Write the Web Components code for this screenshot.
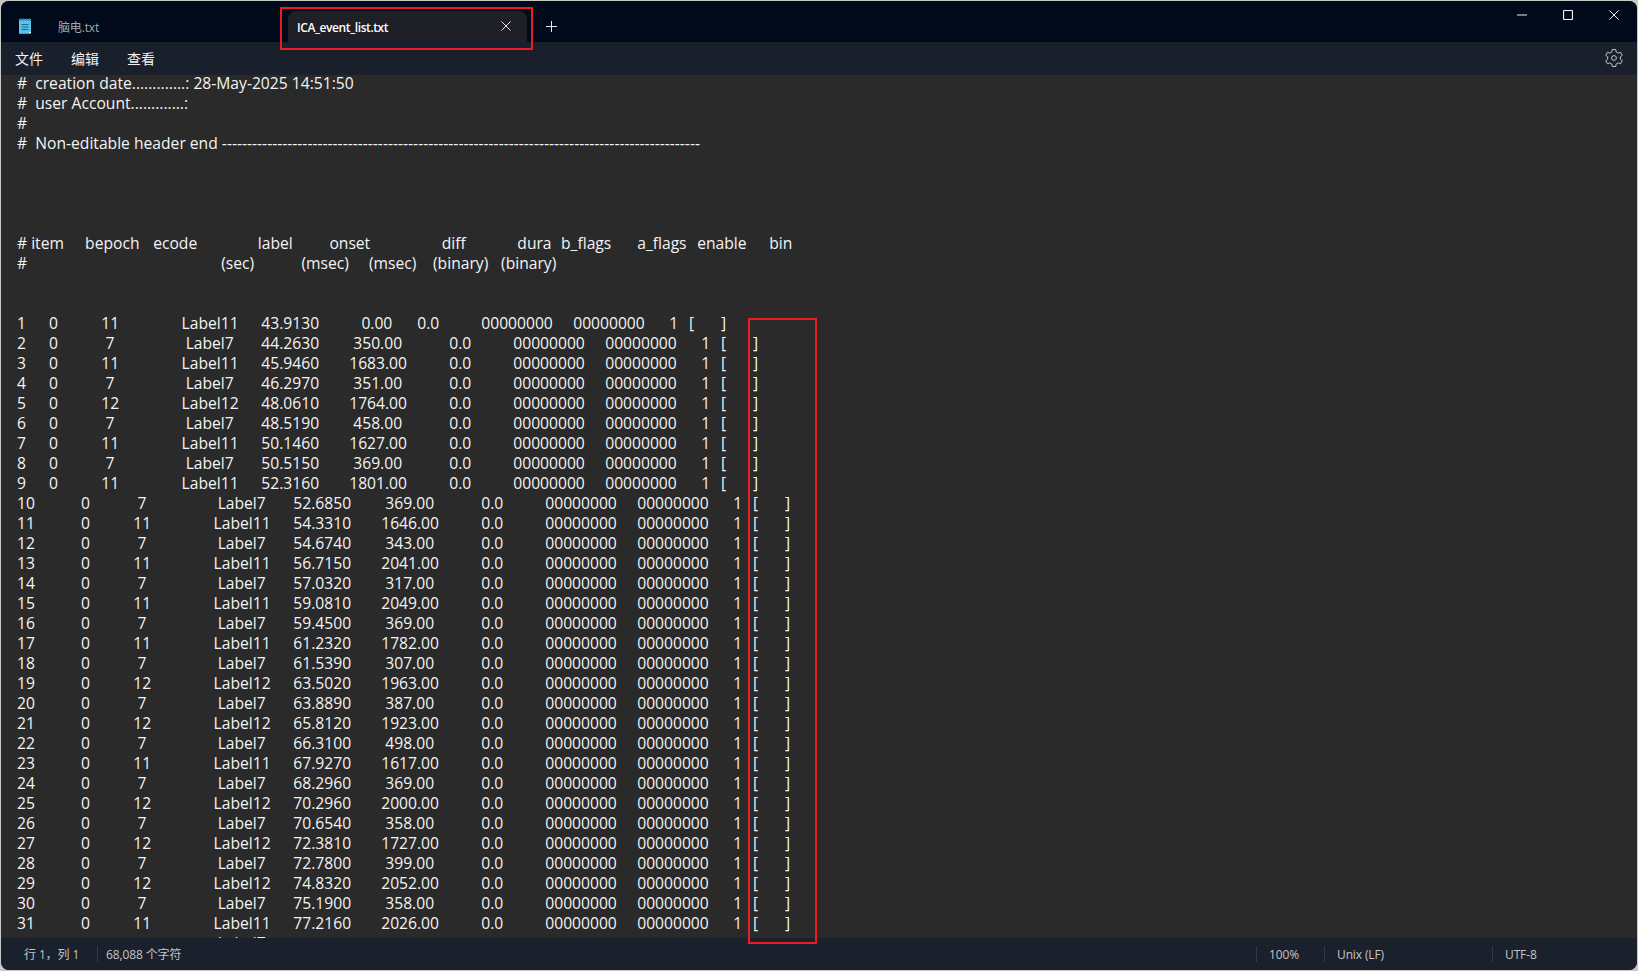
<!DOCTYPE html>
<html lang="zh"><head><meta charset="utf-8"><title>ICA_event_list.txt</title>
<style>
html,body{margin:0;height:100%;overflow:hidden}
body{background:#c8c8c8;padding:1px 1px 1px 1px;box-sizing:border-box;width:1638px;height:971px}
</style></head><body>
<np-window>
  <np-titlebar></np-titlebar>
  <np-menubar></np-menubar>
  <np-editor></np-editor>
  <np-status></np-status>
</np-window>
<script>
const UI='"Open Sans","Noto Sans CJK SC",sans-serif';
function el(name,html){customElements.define(name,class extends HTMLElement{connectedCallback(){if(!this.shadowRoot)this.attachShadow({mode:'open'}).innerHTML=html;}});}

el('np-window',`<style>:host{display:flex;flex-direction:column;position:relative;height:969px;border-radius:8px;overflow:hidden;background:#2a2a2a}
.mark{position:absolute;box-sizing:border-box;border:2px solid #ed1c24;pointer-events:none}
.m1{left:279px;top:6px;width:253px;height:43px}
.m2{left:747px;top:317px;width:69px;height:626px}</style>
<slot></slot><div class="mark m1"></div><div class="mark m2"></div>`);

el('np-tab',`<style>:host{display:flex;align-items:center;box-sizing:border-box;width:239px;height:31px;padding:0 16px 0 9px;border-radius:8px 8px 0 0;font:12px ${UI};color:#a9adb3}
:host([active]){background:#1e1f27;color:#fff;font-weight:600;letter-spacing:-.42px}
.t{flex:1;white-space:pre;position:relative;top:1px}
svg{display:block;position:relative;top:-1px}</style><span class="t"><slot></slot></span><svg width="10" height="10" viewBox="0 0 10 10"><path d="M.5.5l9 9M9.5.5l-9 9" stroke="#e6e6e6" stroke-width="1" fill="none"/></svg>`);

el('np-titlebar',`<style>:host{display:flex;align-items:flex-end;height:41px;background:#000a1a;flex:none}
.ic{width:48px;align-self:flex-start;padding:17px 0 0 18px;box-sizing:border-box}
.ic svg{display:block}
.plain{display:flex;align-items:center;width:239px;height:31px;padding-left:9px;box-sizing:border-box;font:12px ${UI};letter-spacing:-.15px;color:#a2a6ac}
.plus{width:48px;height:31px;display:flex;align-items:center;justify-content:center}
.sp{flex:1}
.w{align-self:flex-start;width:46px;height:28px;display:flex;align-items:center;justify-content:center}
</style>
<div class="ic"><svg width="12" height="16" viewBox="0 0 12 16"><rect y="1" width="12" height="14" fill="#58c2ea"/><rect y="1" width="12" height="2" fill="#3ba6d2"/><path d="M2.5 6.5h7M2.5 9h7M2.5 11.5h7" stroke="#17688f" stroke-width="1"/><path d="M1.5 0v2M4.5 0v2M7.5 0v2M10.5 0v2" stroke="#176f8e" stroke-width="1"/><rect y="15" width="12" height="1" fill="#c47a3c"/><rect x="10" y="14" width="2" height="1" fill="#e7f6fc"/></svg></div>
<div class="plain">脑电.txt</div>
<np-tab active>ICA_event_list.txt</np-tab>
<div class="plus"><svg width="11" height="11" viewBox="0 0 11 11"><path d="M5.5 0v11M0 5.5h11" stroke="#e8e8e8" stroke-width="1"/></svg></div>
<div class="sp"></div>
<div class="w"><svg width="10" height="2" viewBox="0 0 10 2"><path d="M0 1h10" stroke="#f0f0f0" stroke-width="1.1"/></svg></div>
<div class="w"><svg width="10" height="10" viewBox="0 0 10 10"><rect x=".5" y=".5" width="9" height="9" rx="1" stroke="#f4f4f4" stroke-width="1.2" fill="none"/></svg></div>
<div class="w"><svg width="10" height="10" viewBox="0 0 10 10"><path d="M.3.3l9.4 9.4M9.7.3L.3 9.7" stroke="#f0f0f0" stroke-width="1" fill="none"/></svg></div>`);

// six-lobed gear outline
const gear=(()=>{let d='';const P=(r,a)=>(12+r*Math.cos(a*Math.PI/180)).toFixed(2)+' '+(12+r*Math.sin(a*Math.PI/180)).toFixed(2);
for(let i=0;i<6;i++){const a=i*60-90;d+=(i?'L':'M')+P(8.6,a-19)+'L'+P(11.6,a-12)+'L'+P(11.6,a+12)+'L'+P(8.6,a+19);}return d+'Z';})();

el('np-menubar',`<style>:host{display:flex;align-items:center;box-sizing:border-box;height:33px;flex:none;background:#1a202b;padding:0 14px 2px 14px;font:14px ${UI};color:#f2f2f2}
span{margin-right:28px}.sp{flex:1}svg{display:block}</style>
<span>文件</span><span>编辑</span><span>查看</span><div class="sp"></div>
<svg width="18" height="18" viewBox="0 0 24 24" fill="none" stroke="#c4c7cc" stroke-width="1.3" stroke-linejoin="round"><circle cx="12" cy="12" r="3.2"/><path d="${gear}"/></svg>`);

const sp=n=>' '.repeat(n);
const data=[[11,'43.9130','0.00'],[7,'44.2630','350.00'],[11,'45.9460','1683.00'],[7,'46.2970','351.00'],[12,'48.0610','1764.00'],[7,'48.5190','458.00'],[11,'50.1460','1627.00'],[7,'50.5150','369.00'],[11,'52.3160','1801.00'],[7,'52.6850','369.00'],[11,'54.3310','1646.00'],[7,'54.6740','343.00'],[11,'56.7150','2041.00'],[7,'57.0320','317.00'],[11,'59.0810','2049.00'],[7,'59.4500','369.00'],[11,'61.2320','1782.00'],[7,'61.5390','307.00'],[12,'63.5020','1963.00'],[7,'63.8890','387.00'],[12,'65.8120','1923.00'],[7,'66.3100','498.00'],[11,'67.9270','1617.00'],[7,'68.2960','369.00'],[12,'70.2960','2000.00'],[7,'70.6540','358.00'],[12,'72.3810','1727.00'],[7,'72.7800','399.00'],[12,'74.8320','2052.00'],[7,'75.1900','358.00'],[11,'77.2160','2026.00']];
const head=(n,cs)=>n+sp(4)+'\t0\t'+sp(cs.length==1?6:5)+cs+'\t'+sp(cs.length==1?10:9)+'Label'+cs;
const row=(d,i)=>{const[c,t,o]=d;const cs=String(c);const on=o.length==4?6:o.length==6?4:3;
return head(i+1,cs)+'\t'+sp(5)+t+'\t'+sp(on)+o+'\t'+sp(4)+'0.0\t'+sp(4)+'00000000\t'+sp(3)+'00000000\t'+sp(3)+'1\t[\t]';};
const lines=['#  creation date.............: 28-May-2025 14:51:50','#  user Account.............:','#','#  Non-editable header end '+'-'.repeat(95),'','','','',
'# item\t bepoch\t  ecode\t'+sp(12)+'label\t'+sp(6)+'onset\t'+sp(10)+'diff\t'+sp(5)+'dura\tb_flags\t'+sp(3)+'a_flags\t'+sp(2)+'enable\t'+sp(4)+'bin',
'#\t\t\t\t\t\t'+sp(3)+'(sec)\t'+sp(7)+'(msec)\t(msec)\t(binary)\t'+sp(1)+'(binary)','','',...data.map(row),'\t\t\t\t\t'+sp(10)+'Label7'];
const text=lines.join('\n');
customElements.define('np-editor',class extends HTMLElement{connectedCallback(){if(this.shadowRoot)return;const s=this.attachShadow({mode:'open'});
s.innerHTML=`<style>:host{display:block;flex:1;min-height:0;overflow:hidden;background:#2a2a2a;color:#f4f4f4}
pre{margin:-2px 0 0;padding:0 0 0 16px;font:15.65px/20px "Open Sans",sans-serif;tab-size:32px;-moz-tab-size:32px;white-space:pre}</style><pre></pre>`;
s.querySelector('pre').textContent=text;}});

el('np-status',`<style>:host{display:flex;align-items:center;height:32px;flex:none;background:#1a202c;font:12px ${UI};color:#c2c5ca;letter-spacing:-.12px}
.c{display:flex;align-items:center;height:16px;box-sizing:border-box;padding-left:12px;border-left:1px solid #343a45;white-space:pre}
.a{border:0;padding-left:23px;width:96px}.b{width:1159px;padding-left:8px}.d{width:68px}.e{width:168px}</style>
<div class="c a">行 1，列 1</div><div class="c b">68,088 个字符</div><div class="c d">100%</div><div class="c e">Unix (LF)</div><div class="c">UTF-8</div>`);
</script>
</body></html>
